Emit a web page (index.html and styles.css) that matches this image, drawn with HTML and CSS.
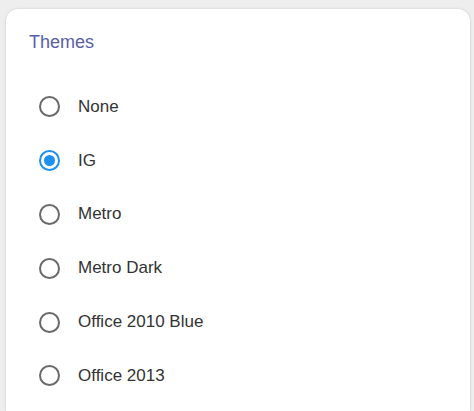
FILE: index.html
```html
<!DOCTYPE html>
<html>
<head>
<meta charset="utf-8">
<link rel="stylesheet" href="styles.css">
</head>
<body>
<div class="card">
  <div class="title">Themes</div>
  <div class="list">
    <label class="row"><span class="radio"></span><span class="label">None</span></label>
    <label class="row"><span class="radio checked"></span><span class="label">IG</span></label>
    <label class="row"><span class="radio"></span><span class="label">Metro</span></label>
    <label class="row"><span class="radio"></span><span class="label">Metro Dark</span></label>
    <label class="row"><span class="radio"></span><span class="label">Office 2010 Blue</span></label>
    <label class="row"><span class="radio"></span><span class="label">Office 2013</span></label>
  </div>
</div>
</body>
</html>
```
FILE: styles.css
```css
html, body {
  margin: 0;
  height: 100%;
  overflow: hidden;
}
body {
  background: #eeeeee;
  padding: 9px 4px 0 6px;
  box-sizing: border-box;
  font-family: "Liberation Sans", Arial, sans-serif;
}
.card {
  background: #ffffff;
  border-radius: 12px 12px 0 0;
  box-shadow: 0 0 3px rgba(0,0,0,0.12), 0 1px 2px rgba(0,0,0,0.08);
  padding: 22px 23px 0 23px;
  height: 100%;
  box-sizing: border-box;
}
.title {
  font-size: 18px;
  line-height: 22px;
  color: #5a5ea8;
}
.list {
  margin-top: 27px;
  padding-left: 10px;
  display: flex;
  flex-direction: column;
}
.row {
  display: flex;
  align-items: center;
  height: 53.8px;
}
.radio {
  width: 21px;
  height: 21px;
  box-sizing: border-box;
  border: 2px solid #6a6a6a;
  border-radius: 50%;
  display: flex;
  align-items: center;
  justify-content: center;
  flex: none;
}
.radio.checked {
  border-color: #1e90f0;
}
.radio.checked::after {
  content: "";
  width: 11px;
  height: 11px;
  border-radius: 50%;
  background: #1e90f0;
}
.label {
  margin-left: 18px;
  font-size: 17px;
  color: #333333;
}
```
